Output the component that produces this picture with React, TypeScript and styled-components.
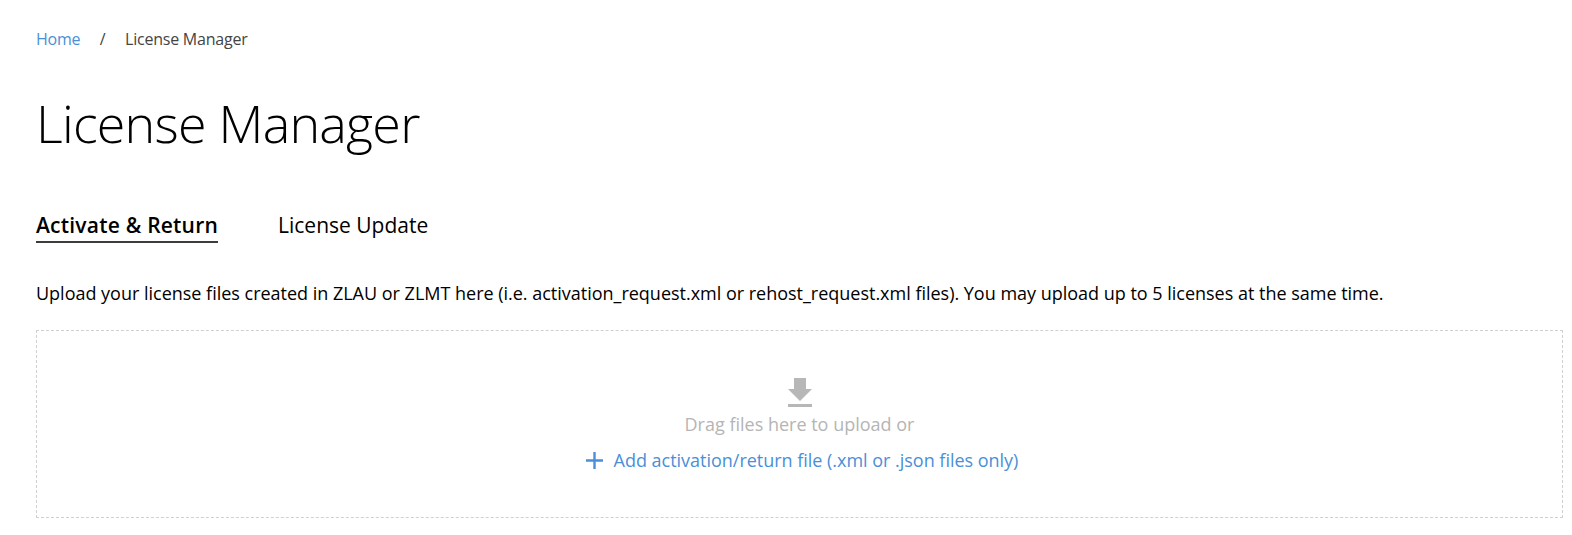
import React from "react";
import styled, { createGlobalStyle } from "styled-components";

const Global = createGlobalStyle`
  html, body { margin: 0; padding: 0; background: #fff; }
  body { font-family: "Open Sans", "Noto Sans", sans-serif; color: #000; }
`;

const Page = styled.main`
  padding: 29px 9px 0 36px;
  display: flex;
  flex-direction: column;
`;

const Breadcrumbs = styled.nav`
  display: flex;
  align-items: center;
  height: 20px;
  font-size: 16px;
  letter-spacing: -0.22px;
  color: #444;
`;

const Crumb = styled.a`
  color: #4a8fd8;
  text-decoration: none;
`;

const Separator = styled.span`
  margin: 0 19.5px;
`;

const Title = styled.h1`
  margin: 38px 0 0;
  font-size: 52px;
  line-height: 72px;
  font-weight: 300;
  letter-spacing: -0.77px;
  color: #000;
`;

const Tabs = styled.div`
  display: flex;
  gap: 60px;
  margin-top: 51px;
`;

const Tab = styled.button<{ $active?: boolean }>`
  padding: 0 0 1px;
  background: none;
  border: 0;
  border-bottom: 2px solid ${(p) => (p.$active ? "#3c3c3c" : "transparent")};
  font-family: inherit;
  font-size: 21px;
  line-height: 30px;
  letter-spacing: ${(p) => (p.$active ? "0.22px" : "0")};
  font-weight: ${(p) => (p.$active ? 600 : 400)};
  color: #000;
`;

const Description = styled.p`
  margin: 38px 0 0;
  font-size: 18px;
  line-height: 24px;
  letter-spacing: -0.012px;
  color: #000;
  white-space: nowrap;
`;

const DropZone = styled.section`
  margin-top: 25px;
  height: 188px;
  box-sizing: border-box;
  border: 1px dashed #d0d0d0;
  display: flex;
  flex-direction: column;
  align-items: center;
  padding-top: 47px;
`;

const DropIcon = styled.svg`
  width: 24px;
  height: 29px;
  display: block;
`;

const Hint = styled.div`
  margin-top: 5px;
  font-size: 18px;
  line-height: 24px;
  color: #b5b5b5;
`;

const AddLink = styled.a`
  display: flex;
  align-items: center;
  gap: 11px;
  margin: 12px 0 0 5px;
  font-size: 18px;
  line-height: 24px;
  letter-spacing: -0.02px;
  color: #4a8fd8;
  text-decoration: none;
`;

const PlusIcon = styled.svg`
  width: 17px;
  height: 17px;
  display: block;
`;

export default function App() {
  return (
    <>
      <Global />
      <Page>
        <Breadcrumbs>
          <Crumb href="#">Home</Crumb>
          <Separator>/</Separator>
          <span>License Manager</span>
        </Breadcrumbs>
        <Title>License Manager</Title>
        <Tabs>
          <Tab $active>Activate &amp; Return</Tab>
          <Tab>License Update</Tab>
        </Tabs>
        <Description>
          Upload your license files created in ZLAU or ZLMT here (i.e. activation_request.xml or rehost_request.xml files). You may upload up to 5 licenses at the same time.
        </Description>
        <DropZone>
          <DropIcon viewBox="0 0 24 29" aria-hidden="true">
            <path d="M6 0h12v11h6L12 23 0 11h6z" fill="#b7b7b7" />
            <rect x="0" y="26" width="24" height="3" fill="#b7b7b7" />
          </DropIcon>
          <Hint>Drag files here to upload or</Hint>
          <AddLink href="#">
            <PlusIcon viewBox="0 0 17 17" aria-hidden="true">
              <path d="M8.5 0v17M0 8.5h17" stroke="#4a8fd8" strokeWidth="2.4" fill="none" />
            </PlusIcon>
            Add activation/return file (.xml or .json files only)
          </AddLink>
        </DropZone>
      </Page>
    </>
  );
}
